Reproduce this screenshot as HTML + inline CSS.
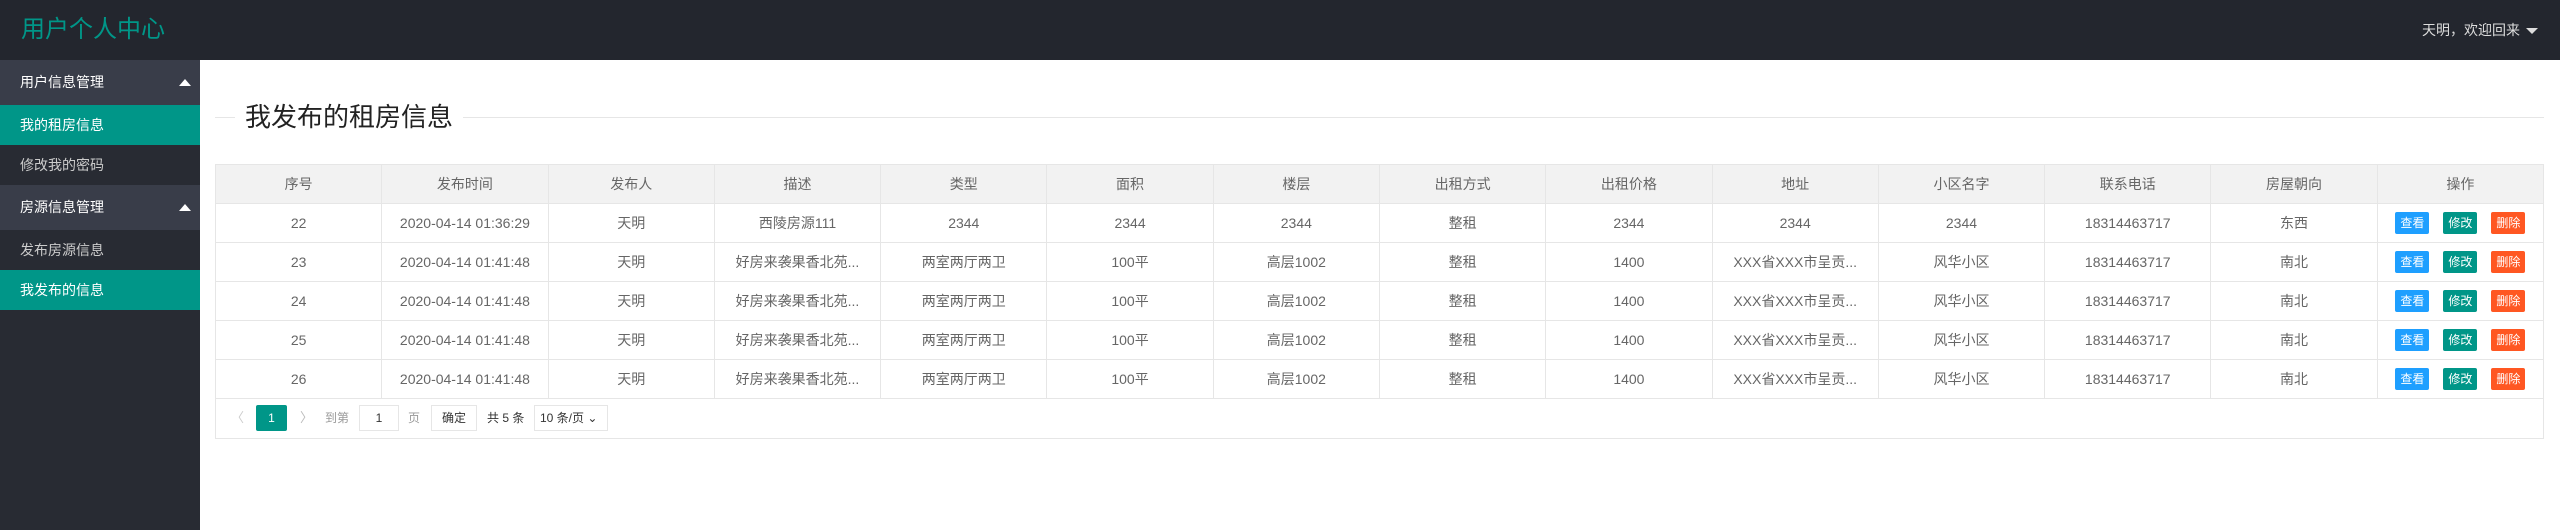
<!DOCTYPE html>
<html><head><meta charset="utf-8">
<style>
*{margin:0;padding:0;box-sizing:border-box}
body{width:2560px;height:530px;overflow:hidden;background:#fff;font-family:"Liberation Sans","Noto Sans CJK SC",sans-serif;font-size:14px;color:#666;position:relative}
.hd{position:absolute;left:0;top:0;width:2560px;height:60px;background:#23262e}
.logo{position:absolute;left:21px;top:13px;font-size:24px;color:#009688;line-height:34px}
.user{position:absolute;left:2422px;top:20px;color:#ddd;font-size:14px;line-height:20px}
.user i{display:inline-block;width:0;height:0;border-left:6px solid transparent;border-right:6px solid transparent;border-top:6px solid #ddd;vertical-align:middle;margin-left:6px}
.side{position:absolute;left:0;top:60px;width:200px;height:470px;background:#282b33}
.g{height:45px;background:#393d49;color:#fff;line-height:45px;padding-left:20px;position:relative}
.g i{position:absolute;left:179px;top:19px;border-left:6px solid transparent;border-right:6px solid transparent;border-bottom:7px solid #fff}
.it{height:40px;line-height:40px;padding-left:20px;color:#ccc}
.it.on{background:#009688;color:#fff}
.line{position:absolute;left:215px;top:117px;width:2329px;height:1px;background:#e6e6e6}
.legend{position:absolute;left:235px;top:100px;padding:0 10px;background:#fff;font-size:26px;line-height:34px;color:#222}
table{position:absolute;left:215px;top:164px;width:2329px;border-collapse:collapse;table-layout:fixed}
td,th{border:1px solid #e6e6e6;height:39px;text-align:center;font-weight:normal;font-size:14px;color:#666;white-space:nowrap;overflow:hidden}
th{background:#f2f2f2}
.b{display:inline-block;width:34px;height:22px;line-height:22px;color:#fff;font-size:12px;border-radius:2px;margin:0 7px;vertical-align:middle}
.b1{background:#1E9FFF}.b2{background:#009688}.b3{background:#FF5722}
.pg{position:absolute;left:215px;top:398px;width:2329px;height:41px;border:1px solid #e6e6e6;border-top:none;font-size:12px}
.pg span{position:absolute;line-height:26px;top:7px}
</style></head><body>
<div class="hd"><div class="logo">用户个人中心</div><div class="user">天明，欢迎回来<i></i></div></div>
<div class="side">
<div class="g">用户信息管理<i></i></div>
<div class="it on">我的租房信息</div>
<div class="it">修改我的密码</div>
<div class="g">房源信息管理<i></i></div>
<div class="it">发布房源信息</div>
<div class="it on">我发布的信息</div>
</div>
<div class="line"></div>
<div class="legend">我发布的租房信息</div>
<table>
<tr><th>序号</th><th>发布时间</th><th>发布人</th><th>描述</th><th>类型</th><th>面积</th><th>楼层</th><th>出租方式</th><th>出租价格</th><th>地址</th><th>小区名字</th><th>联系电话</th><th>房屋朝向</th><th>操作</th></tr>
<tr><td>22</td><td>2020-04-14 01:36:29</td><td>天明</td><td>西陵房源111</td><td>2344</td><td>2344</td><td>2344</td><td>整租</td><td>2344</td><td>2344</td><td>2344</td><td>18314463717</td><td>东西</td><td><span class="b b1">查看</span><span class="b b2">修改</span><span class="b b3">删除</span></td></tr>
<tr><td>23</td><td>2020-04-14 01:41:48</td><td>天明</td><td>好房来袭果香北苑...</td><td>两室两厅两卫</td><td>100平</td><td>高层1002</td><td>整租</td><td>1400</td><td>XXX省XXX市呈贡...</td><td>风华小区</td><td>18314463717</td><td>南北</td><td><span class="b b1">查看</span><span class="b b2">修改</span><span class="b b3">删除</span></td></tr>
<tr><td>24</td><td>2020-04-14 01:41:48</td><td>天明</td><td>好房来袭果香北苑...</td><td>两室两厅两卫</td><td>100平</td><td>高层1002</td><td>整租</td><td>1400</td><td>XXX省XXX市呈贡...</td><td>风华小区</td><td>18314463717</td><td>南北</td><td><span class="b b1">查看</span><span class="b b2">修改</span><span class="b b3">删除</span></td></tr>
<tr><td>25</td><td>2020-04-14 01:41:48</td><td>天明</td><td>好房来袭果香北苑...</td><td>两室两厅两卫</td><td>100平</td><td>高层1002</td><td>整租</td><td>1400</td><td>XXX省XXX市呈贡...</td><td>风华小区</td><td>18314463717</td><td>南北</td><td><span class="b b1">查看</span><span class="b b2">修改</span><span class="b b3">删除</span></td></tr>
<tr><td>26</td><td>2020-04-14 01:41:48</td><td>天明</td><td>好房来袭果香北苑...</td><td>两室两厅两卫</td><td>100平</td><td>高层1002</td><td>整租</td><td>1400</td><td>XXX省XXX市呈贡...</td><td>风华小区</td><td>18314463717</td><td>南北</td><td><span class="b b1">查看</span><span class="b b2">修改</span><span class="b b3">删除</span></td></tr>
</table>
<div class="pg">
<span style="left:15px;color:#ccc;font-size:13px">〈</span>
<span style="left:40px;width:31px;height:26px;background:#009688;color:#fff;text-align:center;border-radius:2px">1</span>
<span style="left:84px;color:#bbb;font-size:13px">〉</span>
<span style="left:109px;color:#999">到第</span>
<span style="left:143px;width:40px;height:26px;border:1px solid #e6e6e6;text-align:center;line-height:24px;color:#333">1</span>
<span style="left:192px;color:#999">页</span>
<span style="left:215px;width:46px;height:26px;border:1px solid #e6e6e6;text-align:center;line-height:24px;color:#333">确定</span>
<span style="left:271px;color:#333">共 5 条</span>
<span style="left:318px;width:74px;height:26px;border:1px solid #e6e6e6;line-height:24px;padding-left:5px;color:#333">10 条/页 ⌄</span>
</div>
</body></html>
